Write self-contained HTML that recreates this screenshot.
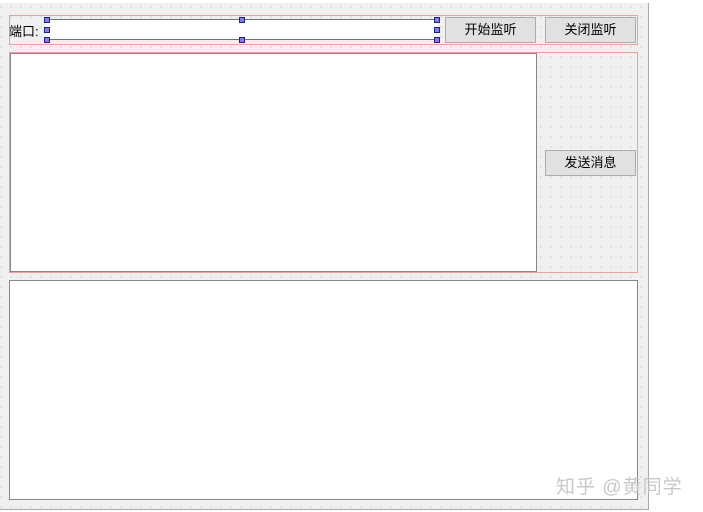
<!DOCTYPE html>
<html><head><meta charset="utf-8"><style>
html,body{margin:0;padding:0;}
body{width:703px;height:512px;background:#fff;position:relative;overflow:hidden;font-family:"Liberation Sans","Noto Sans CJK SC",sans-serif;font-size:13px;color:#000;}
.form{position:absolute;left:0;top:3px;width:648px;height:506px;background-color:#f0f0f0;
background-image:radial-gradient(circle,#b8b8b8 0.6px,transparent 0.8px);background-size:10px 10px;background-position:-4px -1px;
border-right:1px solid #a8a8a8;border-bottom:1px solid #a8a8a8;}
.abs{position:absolute;box-sizing:border-box;}
.red{border:1px solid #e8a0a0;}
.btn{background:#e1e1e1;border:1px solid #adadad;text-align:center;font-size:13px;}
.te{background:#fff;border:1px solid #828790;}
.h{position:absolute;width:6px;height:6px;background:#8080e0;border:1px solid #202080;box-sizing:border-box;}
</style></head><body>
<div class="form"></div>
<div class="abs red" style="left:9px;top:15px;width:629px;height:30px;"></div>
<div class="abs" style="left:9px;top:21px;font-size:13px;">端口:</div>
<div class="abs" style="left:46px;top:19px;width:392px;height:21px;background:#fff;border-top:1px solid #6a7a6a;border-bottom:1px solid #6a7a6a;"></div>
<div class="h" style="left:44px;top:17px"></div><div class="h" style="left:239px;top:17px"></div><div class="h" style="left:434px;top:17px"></div>
<div class="h" style="left:44px;top:27px"></div><div class="h" style="left:434px;top:27px"></div>
<div class="h" style="left:44px;top:37px"></div><div class="h" style="left:239px;top:37px"></div><div class="h" style="left:434px;top:37px"></div>
<div class="abs btn" style="left:445px;top:17px;width:91px;height:26px;line-height:24px;">开始监听</div>
<div class="abs btn" style="left:545px;top:17px;width:91px;height:26px;line-height:24px;">关闭监听</div>
<div class="abs red" style="left:9px;top:52px;width:629px;height:221px;"></div>
<div class="abs te" style="left:10px;top:53px;width:527px;height:219px;"></div>
<div class="abs btn" style="left:545px;top:150px;width:91px;height:26px;line-height:24px;">发送消息</div>
<div class="abs te" style="left:9px;top:280px;width:629px;height:220px;"></div>
<div class="abs" style="left:556px;top:472px;font-size:19px;color:#c8c8c8;letter-spacing:1px;">知乎 @黄同学</div>
</body></html>
